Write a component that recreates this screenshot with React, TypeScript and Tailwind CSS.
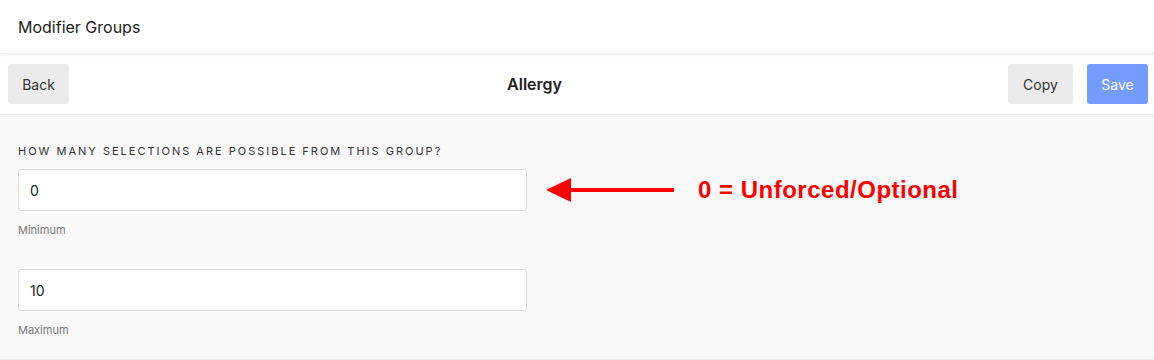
export default function App() {
  return (
    <div className="w-[1154px] h-[360px] bg-[#f9f9f9] font-['Inter',sans-serif] text-[#222] overflow-hidden">
      <div className="h-[54px] bg-white flex items-center px-[18px] shadow-[0_1px_3px_rgba(0,0,0,0.08)] relative z-10 border-b border-[#ececec]">
        <span className="text-[16px] text-[#222]">Modifier Groups</span>
      </div>
      <div className="h-[61px] bg-white border-b border-[#e6e6e6] flex items-center pl-[8px] pr-[6px]">
        <button className="h-[40px] w-[61px] rounded-[3px] bg-[#ebebeb] text-[14px] text-[#333]">Back</button>
        <div className="flex-1 text-center mr-[8px] text-[16px] font-semibold text-[#222]">Allergy</div>
        <div className="flex gap-[14px]">
          <button className="h-[40px] w-[65px] rounded-[3px] bg-[#ebebeb] text-[14px] text-[#333]">Copy</button>
          <button className="h-[40px] w-[61px] rounded-[3px] bg-[#729cff] text-[14px] text-white">Save</button>
        </div>
      </div>
      <div className="px-[18px] pt-[29px] border-b border-[#e6e6e6] h-[245px]">
        <div className="text-[11px] tracking-[2px] text-[#333] leading-[14px]">HOW MANY SELECTIONS ARE POSSIBLE FROM THIS GROUP?</div>
        <div className="flex items-center mt-[11px]">
          <div className="w-[509px] h-[42px] bg-white border border-[#dcdcdc] rounded-[3px] flex items-center px-[11px] text-[14px]">0</div>
          <svg width="128" height="26" viewBox="0 0 128 26" className="ml-[19px]">
            <polygon points="0,13 25,1 25,25" fill="#ff0000" />
            <rect x="22" y="11" width="106" height="4" fill="#ff0000" />
          </svg>
          <span className="ml-[24px] font-['Liberation_Sans',Arial,sans-serif] font-bold text-[24px] tracking-[0.5px] leading-[28px] text-[#ff0000]">0 = Unforced/Optional</span>
        </div>
        <div className="text-[11px] text-[#777] mt-[12px] leading-[14px]">Minimum</div>
        <div className="w-[509px] h-[42px] bg-white border border-[#dcdcdc] rounded-[3px] flex items-center px-[11px] text-[14px] mt-[32px]">10</div>
        <div className="text-[11px] text-[#777] mt-[12px] leading-[14px]">Maximum</div>
      </div>
    </div>
  )
}
